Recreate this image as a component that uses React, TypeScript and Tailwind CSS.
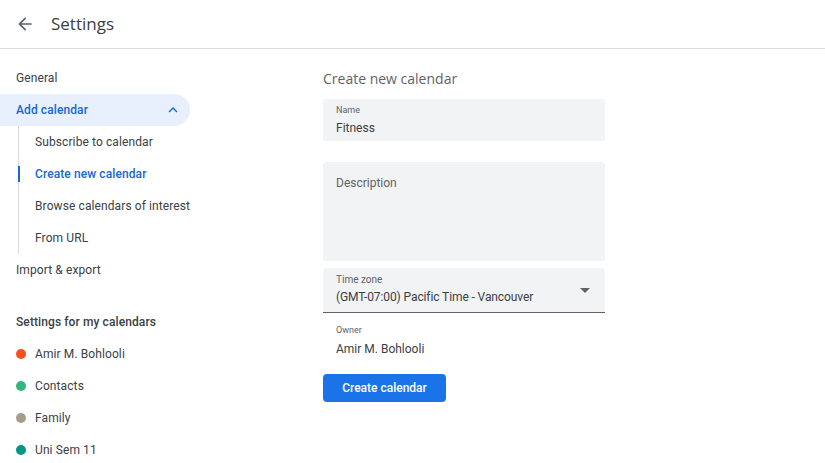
import React from "react";

const subItems = [
  { label: "Subscribe to calendar", active: false },
  { label: "Create new calendar", active: true },
  { label: "Browse calendars of interest", active: false },
  { label: "From URL", active: false },
];

const calendars = [
  { name: "Amir M. Bohlooli", color: "bg-[#f4511e]" },
  { name: "Contacts", color: "bg-[#33b679]" },
  { name: "Family", color: "bg-[#a79b8e]" },
  { name: "Uni Sem 11", color: "bg-[#009688]" },
];

const Sidebar: React.FC = () => (
  <nav className="w-[190px] shrink-0 whitespace-nowrap pt-[13px] text-[12px] tracking-[0.1px] text-[#3c4043]">
    <div className="flex h-8 items-center pl-4">General</div>
    <div className="flex h-8 items-center justify-between rounded-r-full bg-[#e8f0fe] pl-4 pr-[8px] font-medium text-[#1967d2]">
      <span>Add calendar</span>
      <svg width="18" height="18" viewBox="0 0 24 24" className="text-[#1967d2]">
        <path d="M7.41 15.41 12 10.83l4.59 4.58L18 14l-6-6-6 6z" fill="currentColor" />
      </svg>
    </div>
    <div className="ml-[18px] border-l border-[#dadce0]">
      {subItems.map((item) => (
        <div
          key={item.label}
          className={
            item.active
              ? "relative flex h-8 items-center pl-4 font-medium text-[#1967d2]"
              : "flex h-8 items-center pl-4"
          }
        >
          {item.active && (
            <span className="absolute left-[-1px] top-2 h-4 w-[2px] bg-[#1967d2]" />
          )}
          {item.label}
        </div>
      ))}
    </div>
    <div className="flex h-8 items-center pl-4">Import &amp; export</div>
    <div className="mt-5 flex h-8 items-center pl-4 font-medium">Settings for my calendars</div>
    {calendars.map((c) => (
      <div key={c.name} className="flex h-8 items-center gap-[9px] pl-4">
        <span className={`h-[10px] w-[10px] rounded-full ${c.color}`} />
        {c.name}
      </div>
    ))}
  </nav>
);

const Main: React.FC = () => (
  <main className="pl-[133px] pt-[13px] text-[#3c4043]">
    <div className="flex h-8 items-center font-['Open_Sans',sans-serif] text-[14px] text-[#5f6368]">
      Create new calendar
    </div>
    <div className="mt-[5px] flex h-[42px] w-[282px] flex-col rounded-t bg-[#f1f3f4] px-[13px] pt-[5px]">
      <span className="text-[9px] leading-[12px] text-[#5f6368]">Name</span>
      <span className="mt-[4px] text-[12px] leading-[16px]">Fitness</span>
    </div>
    <div className="mt-[21px] h-[99px] w-[282px] rounded-t bg-[#f1f3f4] px-[13px] pt-[12px] text-[12px] text-[#5f6368]">
      Description
    </div>
    <div className="relative mt-[7px] flex h-[45px] w-[282px] flex-col rounded-t border-b border-[#5f6368] bg-[#f1f3f4] px-[13px] pt-[5px]">
      <span className="text-[10px] leading-[14px] text-[#5f6368]">Time zone</span>
      <span className="mt-[1px] text-[12px] leading-[18px] tracking-[-0.1px]">(GMT-07:00) Pacific Time - Vancouver</span>
      <span className="absolute right-[15px] top-[20px] h-0 w-0 border-x-[5px] border-t-[5px] border-x-transparent border-t-[#5f6368]" />
    </div>
    <div className="flex flex-col px-[13px] pt-[11px]">
      <span className="text-[9px] leading-[12px] text-[#5f6368]">Owner</span>
      <span className="mt-[5px] text-[12px] leading-[16px]">Amir M. Bohlooli</span>
    </div>
    <button className="mt-[17px] h-[28px] w-[123px] rounded bg-[#1a73e8] text-[12px] font-medium text-white">
      Create calendar
    </button>
  </main>
);

export default function App() {
  return (
    <div className="h-[463px] w-[825px] overflow-hidden bg-white font-['Roboto',sans-serif]">
      <header className="flex h-[49px] items-center border-b border-[#dadce0]">
        <svg width="20" height="20" viewBox="0 0 24 24" className="ml-[15px] text-[#5f6368]">
          <path d="M20 11H7.83l5.59-5.59L12 4l-8 8 8 8 1.41-1.41L7.83 13H20v-2z" fill="currentColor" />
        </svg>
        <span className="ml-[16px] font-['Open_Sans',sans-serif] text-[17px] text-[#3c4043]">Settings</span>
      </header>
      <div className="flex">
        <Sidebar />
        <Main />
      </div>
    </div>
  );
}
